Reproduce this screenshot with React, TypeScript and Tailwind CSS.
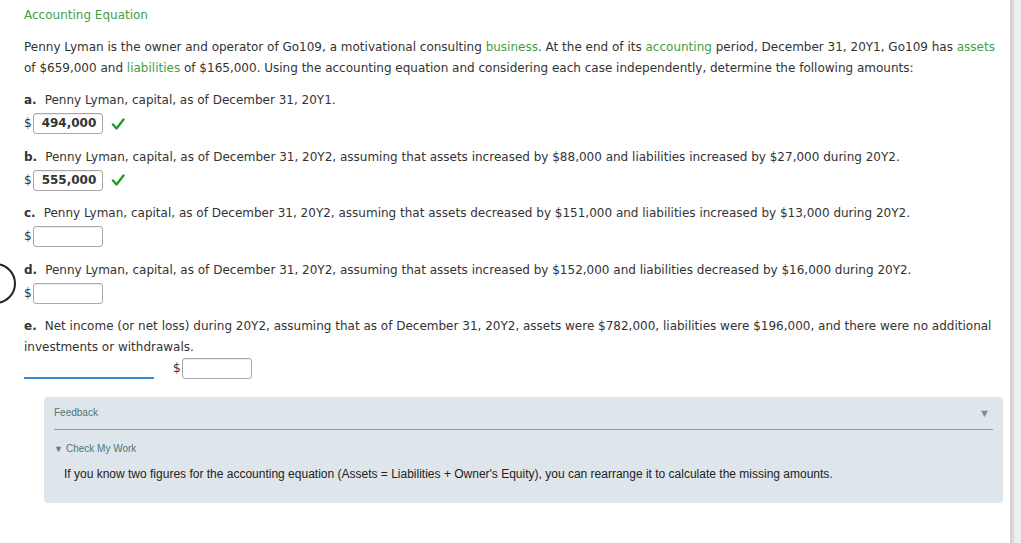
import type { ReactNode } from "react";

const green = "text-[#43a047]";

function CheckMark() {
    return (
        <svg width="14" height="14" viewBox="0 0 14 14" className="ml-[8px]">
            <path d="M2 7.5 L5.5 11.5 L12.5 2.5" fill="none" stroke="#1f9e2a" strokeWidth="2.4" strokeLinecap="round" strokeLinejoin="round" />
        </svg>
    );
}

function AnswerBox({ value }: { value?: string }) {
    return (
        <div className="ml-px h-[21px] w-[70px] rounded-[3px] border border-[#a9a9a9] bg-white pl-[8px] text-[12px] leading-[19px] font-bold text-[#333] shadow-[inset_0_1px_1px_rgba(0,0,0,0.08)]">
            {value}
        </div>
    );
}

function Question({ tag, text, value, checked }: { tag: string; text: ReactNode; value?: string; checked?: boolean }) {
    return (
        <div className="mb-[12.5px]">
            <p>
                <b className="mr-[8px]">{tag}</b>
                {text}
            </p>
            <div className="mt-[2px] flex items-center">
                <span>$</span>
                <AnswerBox value={value} />
                {checked && <CheckMark />}
            </div>
        </div>
    );
}

export default function App() {
    return (
        <div className="relative flex h-[543px] w-[1021px] overflow-hidden bg-white">
            <div className="absolute left-[-25px] top-[263px] h-[41px] w-[41px] rounded-full border-[2.5px] border-[#222]" />

            <main className="flex-1 pl-6 pr-[7px] pt-[5px] font-['DejaVu_Sans',Verdana,sans-serif] text-[12px] leading-[21px] text-[#333]">
                <h1 className={green}>Accounting Equation</h1>

                <p className="mt-[11px]">
                    Penny Lyman is the owner and operator of Go109, a motivational consulting <span className={green}>business</span>. At the end of its <span className={green}>accounting</span> period, December 31, 20Y1, Go109 has <span className={green}>assets</span> of $659,000 and <span className={green}>liabilities</span> of $165,000. Using the accounting equation and considering each case independently, determine the following amounts:
                </p>

                <div className="mt-[11px]">
                    <Question tag="a." text="Penny Lyman, capital, as of December 31, 20Y1." value="494,000" checked />
                    <Question
                        tag="b."
                        text="Penny Lyman, capital, as of December 31, 20Y2, assuming that assets increased by $88,000 and liabilities increased by $27,000 during 20Y2."
                        value="555,000"
                        checked
                    />
                    <Question
                        tag="c."
                        text="Penny Lyman, capital, as of December 31, 20Y2, assuming that assets decreased by $151,000 and liabilities increased by $13,000 during 20Y2."
                    />
                    <Question
                        tag="d."
                        text="Penny Lyman, capital, as of December 31, 20Y2, assuming that assets increased by $152,000 and liabilities decreased by $16,000 during 20Y2."
                    />

                    <p>
                        <b className="mr-[8px]">e.</b>
                        Net income (or net loss) during 20Y2, assuming that as of December 31, 20Y2, assets were $782,000, liabilities were $196,000, and there were no additional investments or withdrawals.
                    </p>
                    <div className="flex items-end">
                        <div className="h-[20px] w-[130px] border-b-2 border-[#3c8bd0]" />
                        <span className="ml-[19px] self-center">$</span>
                        <AnswerBox />
                    </div>
                </div>

                <section className="ml-5 mt-[18px] h-[106px] rounded-[4px] bg-[#dee5eb] px-[10px] pt-[9px] font-['Liberation_Sans',Arial,sans-serif]">
                    <div className="flex items-center justify-between border-b border-[#999] pb-[9px]">
                        <span className="text-[10px] leading-[14px] text-[#4f7676]">Feedback</span>
                        <span className="mr-[3px] text-[11px] leading-[14px] text-[#888]">▼</span>
                    </div>
                    <div className="mt-[12px] flex items-center text-[10px] leading-[14px] text-[#4f7676]">
                        <span className="mr-[3px] text-[9px] text-[#777]">▼</span>
                        Check My Work
                    </div>
                    <p className="mt-[10px] pl-[10px] text-[12px] leading-[16px] text-[#222]">
                        If you know two figures for the accounting equation (Assets = Liabilities + Owner's Equity), you can rearrange it to calculate the missing amounts.
                    </p>
                </section>
            </main>

            <div className="w-[11px] shrink-0 bg-[linear-gradient(to_right,#cbcbcb,#e4e4e4_40%,#efefef_50%,#efefef)]" />
        </div>
    );
}
